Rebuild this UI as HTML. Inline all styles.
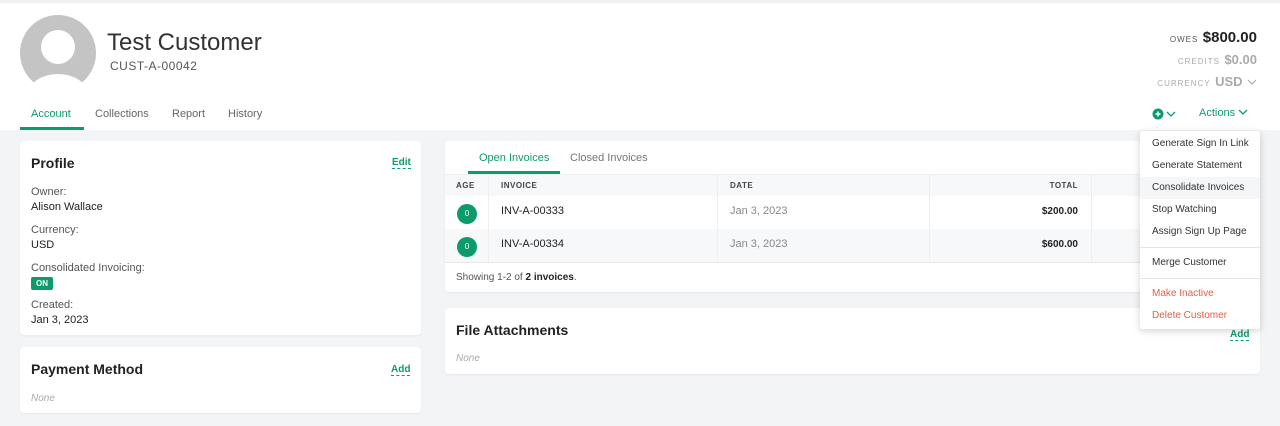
<!DOCTYPE html><html><head><style>
*{box-sizing:border-box;margin:0;padding:0}
body{width:1280px;height:426px;overflow:hidden;font-family:"Liberation Sans",sans-serif;background:#f3f4f6;position:relative;color:#333}
.abs{position:absolute}
.top{left:0;top:0;width:1280px;height:130px;background:#fff;border-top:3px solid #f0f1f3}
.card{background:#fff;border-radius:4px;box-shadow:0 1px 2px rgba(0,0,0,.06)}
.lbl{font-size:11px;color:#555}
.val{font-size:11px;color:#222}
.g{color:#0d9b6c}
.ttl{font-size:14px;font-weight:bold;color:#222}
.link{font-size:10px;font-weight:bold;color:#0d9b6c;border-bottom:1px dashed #0d9b6c}
.menu div{font-size:10px;height:22px;line-height:22px;padding-left:12px;color:#333}
.tot{right:182px;font-size:10px;font-weight:bold;color:#222;text-align:right}
</style></head><body>
<div class="abs top"></div>
<svg class="abs" style="left:20px;top:15px" width="76" height="68" viewBox="0 0 76 68"><defs><clipPath id="c"><circle cx="38" cy="38" r="38"/></clipPath></defs><g clip-path="url(#c)"><rect width="76" height="76" fill="#c4c4c4"/><circle cx="38" cy="32" r="17" fill="#fff"/><ellipse cx="38" cy="78" rx="29" ry="19" fill="#fff"/></g></svg>
<div class="abs" style="left:107px;top:29px;font-size:24px;color:#333">Test Customer</div>
<div class="abs" style="left:110px;top:59px;font-size:12px;color:#555;letter-spacing:.5px">CUST-A-00042</div>
<div class="abs" style="left:31px;top:108px;font-size:11px" ><span class="g">Account</span></div>
<div class="abs" style="left:20px;top:127px;width:64px;height:3px;background:#0d9b6c"></div>
<div class="abs" style="left:95px;top:108px;font-size:11px;color:#666">Collections</div>
<div class="abs" style="left:172px;top:108px;font-size:11px;color:#666">Report</div>
<div class="abs" style="left:228px;top:108px;font-size:11px;color:#666">History</div>
<div class="abs" style="right:23px;top:28px;text-align:right;line-height:20px">
<div><span style="font-size:8px;letter-spacing:1px;color:#555">OWES</span> <b style="font-size:15px;color:#222">$800.00</b></div>
<div><span style="font-size:8px;letter-spacing:1px;color:#aaa">CREDITS</span> <b style="font-size:13px;color:#aaa">$0.00</b></div>
<div><span style="font-size:8px;letter-spacing:1px;color:#aaa">CURRENCY</span> <b style="font-size:13px;color:#aaa">USD</b> <svg width="10" height="8"><path d="M1 2l4 4 4-4" stroke="#aaa" stroke-width="1.2" fill="none"/></svg></div></div>
<svg class="abs" style="left:1152px;top:108px" width="26" height="12"><circle cx="6" cy="6" r="5.5" fill="#0d9b6c"/><path d="M3.5 6h5M6 3.5v5" stroke="#fff" stroke-width="1.5"/><path d="M15 4l4 4 4-4" stroke="#0d9b6c" stroke-width="1.3" fill="none"/></svg>
<div class="abs g" style="left:1199px;top:107px;font-size:11px">Actions <svg width="10" height="8"><path d="M1 2l4 4 4-4" stroke="#0d9b6c" stroke-width="1.3" fill="none"/></svg></div>

<div class="abs card" style="left:20px;top:141px;width:401px;height:194px"></div>
<div class="abs ttl" style="left:31px;top:155px">Profile</div>
<div class="abs" style="left:392px;top:152px"><span class="link">Edit</span></div>
<div class="abs lbl" style="left:31px;top:186px">Owner:</div><div class="abs val" style="left:31px;top:201px">Alison Wallace</div>
<div class="abs lbl" style="left:31px;top:224px">Currency:</div><div class="abs val" style="left:31px;top:239px">USD</div>
<div class="abs lbl" style="left:31px;top:262px">Consolidated Invoicing:</div>
<div class="abs" style="left:31px;top:277px;background:#0d9b6c;color:#fff;font-size:8px;font-weight:bold;padding:2px 5px;border-radius:2px">ON</div>
<div class="abs lbl" style="left:31px;top:299px">Created:</div><div class="abs val" style="left:31px;top:314px">Jan 3, 2023</div>
<div class="abs card" style="left:20px;top:347px;width:401px;height:66px"></div>
<div class="abs ttl" style="left:31px;top:361px">Payment Method</div>
<div class="abs" style="left:391px;top:359px"><span class="link">Add</span></div>
<div class="abs" style="left:31px;top:393px;font-size:10px;color:#aaa;font-style:italic">None</div>

<div class="abs card" style="left:445px;top:141px;width:815px;height:151px;overflow:hidden">
<div class="abs g" style="left:34px;top:11px;font-size:11px">Open Invoices</div>
<div class="abs" style="left:23px;top:30px;width:92px;height:3px;background:#0d9b6c"></div>
<div class="abs" style="left:125px;top:11px;font-size:11px;color:#777">Closed Invoices</div>
<div class="abs" style="left:0;top:33px;width:815px;height:22px;background:#f7f8f9;border-top:1px solid #eee"></div>
<div class="abs" style="left:0;top:88px;width:815px;height:33px;background:#f7f8f9"></div>
<div class="abs" style="left:0;top:121px;width:815px;border-top:1px solid #e8e8e8"></div>
<div class="abs" style="left:43px;top:33px;height:88px;border-left:1px solid #eee"></div>
<div class="abs" style="left:272px;top:33px;height:88px;border-left:1px solid #eee"></div>
<div class="abs" style="left:484px;top:33px;height:88px;border-left:1px solid #eee"></div>
<div class="abs" style="left:646px;top:33px;height:88px;border-left:1px solid #eee"></div>
<div class="abs" style="left:11px;top:40px;font-size:8px;font-weight:bold;letter-spacing:.5px;color:#444">AGE</div>
<div class="abs" style="left:56px;top:40px;font-size:8px;font-weight:bold;letter-spacing:.5px;color:#444">INVOICE</div>
<div class="abs" style="left:285px;top:40px;font-size:8px;font-weight:bold;letter-spacing:.5px;color:#444">DATE</div>
<div class="abs" style="right:182px;top:40px;font-size:8px;font-weight:bold;letter-spacing:.5px;color:#444">TOTAL</div>
<div class="abs" style="left:12px;top:63px;width:20px;height:20px;border-radius:50%;background:#0d9b6c;color:#fff;font-size:8px;text-align:center;line-height:20px">0</div>
<div class="abs" style="left:12px;top:96px;width:20px;height:20px;border-radius:50%;background:#0d9b6c;color:#fff;font-size:8px;text-align:center;line-height:20px">0</div>
<div class="abs val" style="left:56px;top:64px">INV-A-00333</div>
<div class="abs val" style="left:56px;top:97px">INV-A-00334</div>
<div class="abs" style="left:285px;top:64px;font-size:11px;color:#888">Jan 3, 2023</div>
<div class="abs" style="left:285px;top:97px;font-size:11px;color:#888">Jan 3, 2023</div>
<div class="abs tot" style="top:65px">$200.00</div>
<div class="abs tot" style="top:98px">$600.00</div>
<div class="abs" style="left:11px;top:131px;font-size:10px;color:#555">Showing 1-2 of <b style="color:#222">2 invoices</b>.</div>
</div>
<div class="abs card" style="left:445px;top:308px;width:815px;height:66px"></div>
<div class="abs ttl" style="left:456px;top:322px">File Attachments</div>
<div class="abs" style="left:1230px;top:324px"><span class="link">Add</span></div>
<div class="abs" style="left:456px;top:353px;font-size:10px;color:#aaa;font-style:italic">None</div>

<div class="abs menu" style="left:1140px;top:131px;width:120px;height:198px;background:#fff;border-radius:3px;box-shadow:0 2px 8px rgba(0,0,0,.18);padding-top:2px">
<div>Generate Sign In Link</div><div>Generate Statement</div><div style="background:#f4f6f7">Consolidate Invoices</div><div>Stop Watching</div><div>Assign Sign Up Page</div>
<div style="height:0;border-top:1px solid #e5e5e5;margin:4px 0"></div>
<div>Merge Customer</div>
<div style="height:0;border-top:1px solid #e5e5e5;margin:4px 0"></div>
<div style="color:#e0604a">Make Inactive</div><div style="color:#e0604a">Delete Customer</div></div>
</body></html>
